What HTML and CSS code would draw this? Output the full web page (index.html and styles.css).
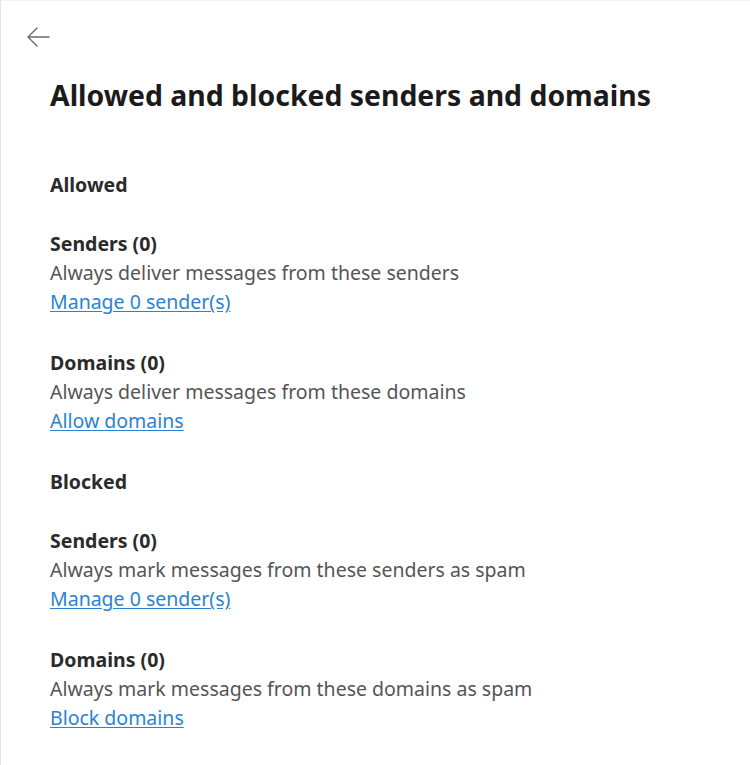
FILE: index.html
```html
<!DOCTYPE html>
<html lang="en">
<head>
<meta charset="utf-8">
<title>Allowed and blocked senders and domains</title>
<link rel="stylesheet" href="styles.css">
</head>
<body>
<div class="panel">
  <button class="back" aria-label="Back">
    <svg width="24" height="20" viewBox="0 0 24 20"><path d="M11 1 L2 10 L11 19 M2 10 H23" fill="none" stroke="#6b6b6b" stroke-width="1.4" stroke-linecap="round" stroke-linejoin="round"/></svg>
  </button>
  <h1 class="title">Allowed and blocked senders and domains</h1>

  <section class="section">
    <h2 class="section-title">Allowed</h2>
    <div class="group">
      <h3 class="group-title">Senders (0)</h3>
      <p class="desc">Always deliver messages from these senders</p>
      <a class="link" href="#">Manage 0 sender(s)</a>
    </div>
    <div class="group">
      <h3 class="group-title">Domains (0)</h3>
      <p class="desc">Always deliver messages from these domains</p>
      <a class="link" href="#">Allow domains</a>
    </div>
  </section>

  <section class="section">
    <h2 class="section-title">Blocked</h2>
    <div class="group">
      <h3 class="group-title">Senders (0)</h3>
      <p class="desc">Always mark messages from these senders as spam</p>
      <a class="link" href="#">Manage 0 sender(s)</a>
    </div>
    <div class="group">
      <h3 class="group-title">Domains (0)</h3>
      <p class="desc">Always mark messages from these domains as spam</p>
      <a class="link" href="#">Block domains</a>
    </div>
  </section>
</div>
</body>
</html>
```
FILE: styles.css
```css
html, body {
  margin: 0;
  padding: 0;
  background: #ffffff;
}
body {
  font-family: "Noto Sans", "Open Sans", sans-serif;
  color: #242424;
}
.panel {
  width: 750px;
  height: 765px;
  box-sizing: border-box;
  border-left: 1px solid #e4e4e4;
  border-top: 1px solid #f3f3f3;
  padding: 26px 0 0 49px;
}
.back {
  display: block;
  margin: 0 0 0 -24px;
  padding: 0;
  border: 0;
  background: none;
  width: 24px;
  height: 20px;
  cursor: pointer;
}
.back svg { display: block; }
.title {
  margin: 31px 0 0 0;
  font-size: 28.4px;
  line-height: 34px;
  font-weight: 700;
  color: #1b1b1b;
}
.section-title {
  margin: 58px 0 0 0;
  font-size: 19.5px;
  line-height: 29px;
  font-weight: 700;
  color: #2b2b2b;
}
.section + .section .section-title {
  margin-top: 32px;
}
.group { margin-top: 32px; }
.section-title + .group { margin-top: 30px; }
.group-title {
  margin: 0;
  font-size: 19.5px;
  line-height: 29px;
  font-weight: 700;
  color: #2b2b2b;
}
.desc {
  margin: 0;
  font-size: 19.5px;
  line-height: 29px;
  color: #555555;
}
.link {
  display: inline-block;
  font-size: 19.5px;
  line-height: 29px;
  color: #2a83d2;
  text-decoration: underline;
  text-underline-offset: 2px;
}
```
